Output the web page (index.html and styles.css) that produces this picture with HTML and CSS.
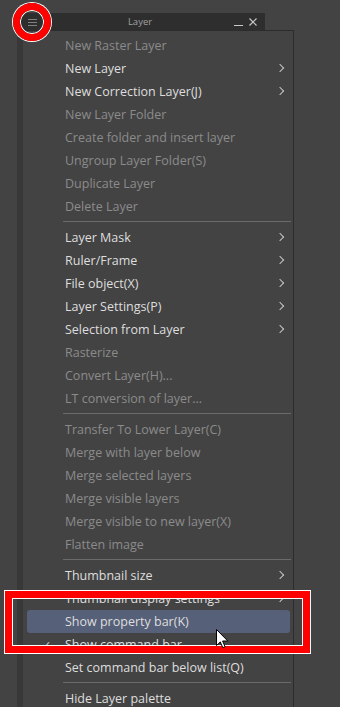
FILE: index.html
```html
<!DOCTYPE html>
<html lang="en">
<head>
  <meta charset="UTF-8">
  <meta name="viewport" content="width=device-width, initial-scale=1.0">
  <title>Layer menu</title>
  <link rel="stylesheet" href="styles.css">
</head>
<body>
  <div class="window">
    <!-- Palette title bar -->
    <div class="titlebar">
      <span class="title">Layer</span>
      <span class="title-btns">
        <span class="btn-min"></span>
        <svg class="btn-close" width="8" height="8" viewBox="0 0 8 8"><path d="M0.5 0.5L7.5 7.5M7.5 0.5L0.5 7.5" stroke="#c8c8c8" stroke-width="1.2"/></svg>
      </span>
    </div>

    <div class="window-body">
      <div class="strip"></div>

      <!-- Palette menu -->
      <div class="menu">
        <div class="item off">New Raster Layer</div>
        <div class="item sub">New Layer<span class="chev"></span></div>
        <div class="item sub">New Correction Layer(J)<span class="chev"></span></div>
        <div class="item off">New Layer Folder</div>
        <div class="item off">Create folder and insert layer</div>
        <div class="item off">Ungroup Layer Folder(S)</div>
        <div class="item off">Duplicate Layer</div>
        <div class="item off">Delete Layer</div>
        <div class="sep"></div>
        <div class="item sub">Layer Mask<span class="chev"></span></div>
        <div class="item sub">Ruler/Frame<span class="chev"></span></div>
        <div class="item sub">File object(X)<span class="chev"></span></div>
        <div class="item sub">Layer Settings(P)<span class="chev"></span></div>
        <div class="item sub">Selection from Layer<span class="chev"></span></div>
        <div class="item off">Rasterize</div>
        <div class="item off">Convert Layer(H)...</div>
        <div class="item off">LT conversion of layer...</div>
        <div class="sep"></div>
        <div class="item off">Transfer To Lower Layer(C)</div>
        <div class="item off">Merge with layer below</div>
        <div class="item off">Merge selected layers</div>
        <div class="item off">Merge visible layers</div>
        <div class="item off">Merge visible to new layer(X)</div>
        <div class="item off">Flatten image</div>
        <div class="sep"></div>
        <div class="item sub">Thumbnail size<span class="chev"></span></div>
        <div class="item sub">Thumbnail display settings<span class="chev"></span></div>
        <div class="item hover">Show property bar(K)</div>
        <div class="item checked">Show command bar</div>
        <div class="item">Set command bar below list(Q)</div>
        <div class="sep"></div>
        <div class="item">Hide Layer palette</div>
      </div>
    </div>
  </div>

  <!-- Annotations drawn over the screenshot -->
  <div class="mark-circle">
    <span class="burger"></span>
  </div>
  <div class="mark-box"></div>
  <svg class="cursor" width="13" height="20" viewBox="0 0 13 20">
    <path d="M0.5 0.5V16.5L4.3 12.9L6.8 18.7L9.1 17.7L6.6 12H11.8Z" fill="#fff" stroke="#000" stroke-width="1"/>
  </svg>
</body>
</html>
```

FILE: styles.css
```css
body {
  margin: 0;
  width: 340px;
  height: 707px;
  overflow: hidden;
  background-color: #434343;
  font-family: "Open Sans", "Noto Sans", sans-serif;
  position: relative;
}
.window {
  margin: 13px 0 0 17px;
}
.titlebar {
  width: 248px;
  height: 17px;
  background-color: #2e2e2e;
  position: relative;
  display: flex;
  align-items: center;
  justify-content: center;
}
.title {
  color: #a0a0a0;
  font-size: 9.5px;
  margin-left: -2px;
}
.title-btns {
  position: absolute;
  right: 8px;
  top: 4px;
  display: flex;
  align-items: flex-end;
  gap: 6px;
  height: 9px;
}
.btn-min {
  width: 9px;
  height: 1px;
  background-color: #c8c8c8;
  margin-bottom: 0;
}
.btn-close {
  display: block;
}
.window-body {
  display: flex;
}
.strip {
  width: 6px;
  height: 700px;
  background-color: #383838;
}
.menu {
  width: 270px;
  background-color: #434343;
  border-top: 1px solid #2c2c2c;
  border-right: 1px solid #2c2c2c;
  padding-top: 3px;
}
.item {
  height: 23px;
  line-height: 23px;
  padding-left: 42px;
  padding-right: 8px;
  font-size: 12.5px;
  color: #dedede;
  position: relative;
  white-space: nowrap;
}
.item.off {
  color: #8b8b8b;
}
.item.hover {
  background-color: #566078;
  border-radius: 3px;
  margin: 0 3px 0 4px;
  padding-left: 38px;
  color: #dedede;
}
.chev {
  position: absolute;
  right: 10px;
  top: 8px;
  width: 5px;
  height: 5px;
  border-top: 1.4px solid #c4c4c4;
  border-right: 1.4px solid #c4c4c4;
  transform: rotate(45deg);
}
.item.checked::before {
  content: "\2713";
  position: absolute;
  left: 19px;
  top: 0;
  font-size: 11px;
  color: #cfcfcf;
}
.sep {
  height: 1px;
  background-color: #6a6a6a;
  margin: 3px 2px 4px 40px;
}
.mark-circle {
  position: absolute;
  left: 13px;
  top: 3px;
  width: 24px;
  height: 24px;
  border: 7px solid #ff0000;
  border-radius: 50%;
  box-shadow: 0 0 0 1px #fff, inset 0 0 0 1px #fff;
  display: flex;
  align-items: center;
  justify-content: center;
}
.burger {
  width: 9px;
  height: 1px;
  background-color: #808080;
  box-shadow: 0 -3px 0 #808080, 0 3px 0 #808080;
}
.mark-box {
  position: absolute;
  left: 5px;
  top: 591px;
  width: 291px;
  height: 48px;
  border: 7px solid #ff0000;
  box-shadow: 0 0 0 1px #fff, inset 0 0 0 1px #fff;
}
.cursor {
  position: absolute;
  left: 216px;
  top: 629px;
}
```
